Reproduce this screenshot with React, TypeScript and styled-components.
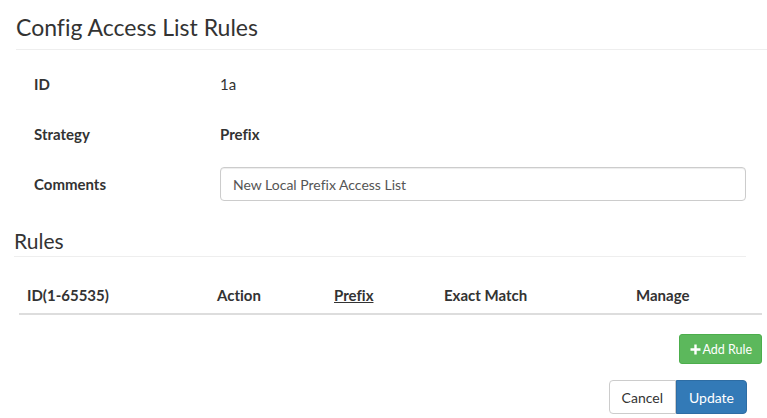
import React from "react";
import styled, { createGlobalStyle } from "styled-components";

const Global = createGlobalStyle`
  html, body { margin: 0; padding: 0; background: #fff; }
  body {
    font-family: Lato, "Helvetica Neue", Arial, sans-serif;
    color: #333;
    font-size: 14px;
    font-variant-ligatures: none;
  }
  * { box-sizing: border-box; }
`;

const Page = styled.div`
  width: 767px;
  height: 418px;
  overflow: hidden;
  position: relative;
`;

const TitleBar = styled.div`
  margin-left: 16px;
  margin-right: -20px;
  padding-top: 14px;
  padding-bottom: 9px;
  border-bottom: 1px solid #eee;
`;

const Title = styled.h1`
  margin: 0;
  font-size: 23px;
  line-height: 26px;
  font-weight: 400;
  color: #333;
`;

const Form = styled.div`
  padding: 17px 21px 0 34px;
  display: flex;
  flex-direction: column;
  gap: 16px;
`;

const Row = styled.div`
  display: grid;
  grid-template-columns: 186px 1fr;
  align-items: center;
  height: 34px;
`;

const Label = styled.div`
  font-size: 15px;
  font-weight: 700;
`;

const Value = styled.div<{ $bold?: boolean }>`
  font-size: 15px;
  font-weight: ${(p) => (p.$bold ? 700 : 400)};
`;

const Input = styled.input`
  width: 100%;
  height: 34px;
  padding: 6px 12px;
  font-family: inherit;
  font-variant-ligatures: none;
  font-size: 14px;
  color: #555;
  border: 1px solid #ccc;
  border-radius: 4px;
  box-shadow: inset 0 1px 1px rgba(0, 0, 0, 0.075);
  outline: none;
`;

const SectionHead = styled.div`
  margin: 28px 21px 0 14px;
  padding-bottom: 4px;
  border-bottom: 1px solid #eee;
`;

const SectionTitle = styled.h2`
  margin: 0;
  font-size: 21px;
  line-height: 1.1;
  font-weight: 400;
`;

const Table = styled.table`
  margin: 20px 5px 0 19px;
  width: 743px;
  border-collapse: collapse;
  table-layout: fixed;
`;

const Th = styled.th<{ $w: number; $link?: boolean }>`
  width: ${(p) => p.$w}px;
  text-align: left;
  padding: 8px;
  font-size: 15px;
  line-height: 20px;
  font-weight: 700;
  border-bottom: 2px solid #ddd;
  text-decoration: ${(p) => (p.$link ? "underline" : "none")};
`;

const Actions = styled.div<{ $right: number; $top: number }>`
  display: flex;
  justify-content: flex-end;
  margin-top: ${(p) => p.$top}px;
  margin-right: ${(p) => p.$right}px;
`;

const AddButton = styled.button`
  display: inline-flex;
  align-items: center;
  gap: 1px;
  height: 30px;
  padding: 0 9px 0 10px;
  font-family: inherit;
  font-variant-ligatures: none;
  font-size: 12.5px;
  color: #fff;
  background: #5cb85c;
  border: 1px solid #4cae4c;
  border-radius: 3px;
`;

const Group = styled.div`
  display: flex;
`;

const Btn = styled.button<{ $primary?: boolean }>`
  height: 34px;
  padding: 0 12px;
  font-family: inherit;
  font-size: 14px;
  color: ${(p) => (p.$primary ? "#fff" : "#333")};
  background: ${(p) => (p.$primary ? "#337ab7" : "#fff")};
  border: 1px solid ${(p) => (p.$primary ? "#2e6da4" : "#ccc")};
  border-radius: ${(p) => (p.$primary ? "0 4px 4px 0" : "4px 0 0 4px")};
`;

export default function App() {
  return (
    <Page>
      <Global />
      <TitleBar>
        <Title>Config Access List Rules</Title>
      </TitleBar>
      <Form>
        <Row>
          <Label>ID</Label>
          <Value>1a</Value>
        </Row>
        <Row>
          <Label>Strategy</Label>
          <Value $bold>Prefix</Value>
        </Row>
        <Row>
          <Label>Comments</Label>
          <Input defaultValue="New Local Prefix Access List" />
        </Row>
      </Form>
      <SectionHead>
        <SectionTitle>Rules</SectionTitle>
      </SectionHead>
      <Table>
        <thead>
          <tr>
            <Th $w={190}>ID(1-65535)</Th>
            <Th $w={117}>Action</Th>
            <Th $w={110} $link>Prefix</Th>
            <Th $w={192}>Exact Match</Th>
            <Th $w={134}>Manage</Th>
          </tr>
        </thead>
      </Table>
      <Actions $right={5} $top={19}>
        <AddButton>
          <svg width="11" height="11" viewBox="0 0 11 11">
            <path d="M5.5 0.5v10M0.5 5.5h10" stroke="#fff" strokeWidth="2.4" />
          </svg>
          Add Rule
        </AddButton>
      </Actions>
      <Actions $right={20} $top={16}>
        <Group>
          <Btn>Cancel</Btn>
          <Btn $primary>Update</Btn>
        </Group>
      </Actions>
    </Page>
  );
}
